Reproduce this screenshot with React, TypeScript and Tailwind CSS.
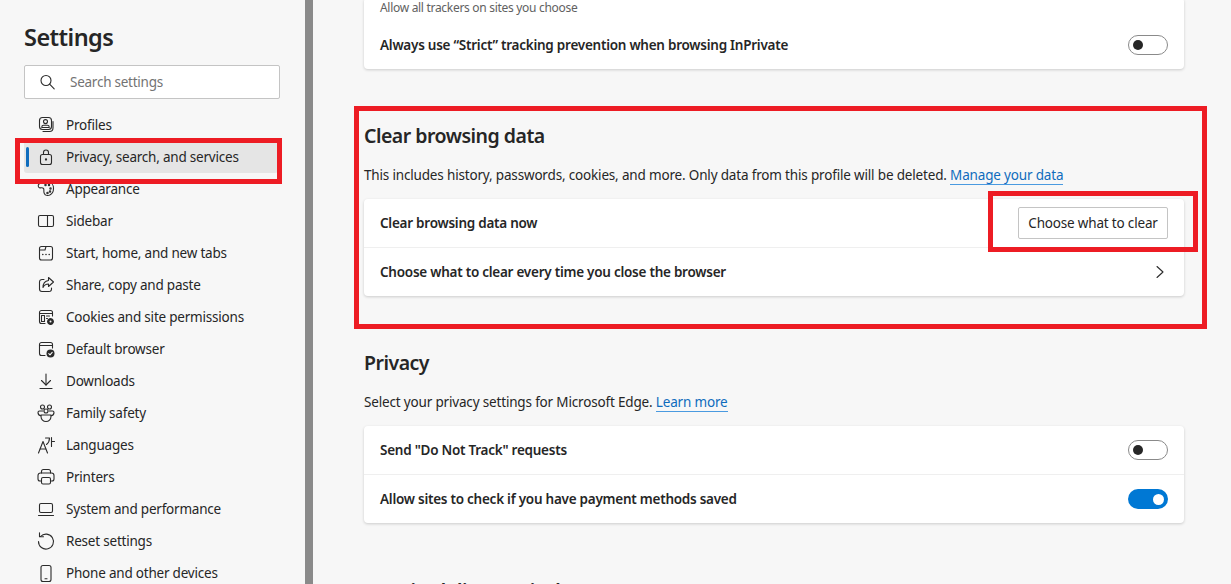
import React from "react";

const S = ({ children }: { children: React.ReactNode }) => (
  <svg width="20" height="20" viewBox="0 0 20 20" fill="none" stroke="#2b2b2b" strokeWidth="1.1" strokeLinecap="round" strokeLinejoin="round" className="shrink-0">
    {children}
  </svg>
);

const icons: Record<string, React.ReactNode> = {
  profiles: (
    <>
      <rect x="3.5" y="2.5" width="12" height="12" rx="3" />
      <circle cx="9.5" cy="6.6" r="2" />
      <path d="M5.8 12.5v-.5c0-1 .8-1.800 1.800-1.800h3.800c1 0 1.800.8 1.800 1.800v.5z" />
      <path d="M17 6.500v6.500a3.500 3.500 0 0 1-3.500 3.500H7" />
    </>
  ),
  lock: (
    <>
      <rect x="4.500" y="7.500" width="11" height="10" rx="2" />
      <path d="M7.500 7.500V5.500a2.500 2.500 0 0 1 5 0v2" />
      <circle cx="10" cy="12.500" r="0.6" fill="#2b2b2b" />
    </>
  ),
  palette: (
    <>
      <path d="M11 2.500c-2 0-3 1.200-4 1.500-1.500.4-3-.3-4.200 1.200-1 1.300-.6 3 .7 3.500 1.300.5 3-.5 4 .7 1 1.300-.3 3 .8 5 1 2 3.500 2.500 5.500 1.600 2.500-1.200 3.700-3.700 3.700-6.500 0-4-2.500-7-6.500-7z" />
      <circle cx="9.500" cy="6" r="0.7" />
      <circle cx="13" cy="6" r="0.7" />
      <circle cx="14.500" cy="9.500" r="0.7" />
      <circle cx="14" cy="12.500" r="0.7" />
      <circle cx="11.500" cy="14" r="0.7" />
    </>
  ),
  sidebar: (
    <>
      <rect x="2.500" y="4.500" width="15" height="11" rx="1.500" />
      <path d="M11.500 4.500v11" />
    </>
  ),
  start: (
    <>
      <rect x="3.500" y="3.500" width="13" height="13.500" rx="2" />
      <path d="M3.500 7h5.500l1-3.500" />
      <path d="M6.800 11.500h.01M10 11.500h.01M13.200 11.500h.01" strokeWidth="1.600" />
    </>
  ),
  share: (
    <>
      <path d="M8 4.500H6a2.500 2.500 0 0 0-2.500 2.500v7A2.500 2.500 0 0 0 6 16.500h7a2.500 2.500 0 0 0 2.500-2.500v-1" />
      <path d="M12.500 2.500l5 4.500-5 4.500V9c-2.500 0-4.300 1-5.500 3.500 0-4 2-6.500 5.500-7z" />
    </>
  ),
  cookies: (
    <>
      <path d="M9 16.500H5.500a2 2 0 0 1-2-2v-9a2 2 0 0 1 2-2h9a2 2 0 0 1 2 2V9" />
      <path d="M3.500 6.500h13" />
      <rect x="5.500" y="8.500" width="3" height="6" />
      <path d="M10.500 9h3M10.500 11.500h1" />
      <circle cx="14.500" cy="14.500" r="2.700" fill="#2b2b2b" stroke="#2b2b2b" strokeDasharray="1.500 0.800" strokeWidth="1.500" />
      <circle cx="14.500" cy="14.500" r="1" fill="#f7f7f7" stroke="none" />
    </>
  ),
  default: (
    <>
      <path d="M9 16.500H5.500a2 2 0 0 1-2-2v-9a2 2 0 0 1 2-2h9a2 2 0 0 1 2 2V9" />
      <path d="M3.500 6.500h13" />
      <circle cx="14.500" cy="14.500" r="4" fill="#2b2b2b" stroke="none" />
      <path d="M12.800 14.600l1.200 1.200 2.200-2.400" stroke="#f7f7f7" />
    </>
  ),
  downloads: (
    <>
      <path d="M10 3v11" />
      <path d="M5.500 9.500l4.500 4.500 4.500-4.500" />
      <path d="M4 17.500h12" />
    </>
  ),
  family: (
    <>
      <circle cx="6.500" cy="4" r="2" />
      <circle cx="13.500" cy="4" r="2" />
      <circle cx="10" cy="8" r="2" />
      <path d="M7 8H3.500A1.500 1.500 0 0 0 2 9.500c0 1.500 1 3 3 3.200" />
      <path d="M13 8h3.500A1.500 1.500 0 0 1 18 9.500c0 1.500-1 3-3 3.200" />
      <path d="M5 12h10v1.500a5 5 0 0 1-10 0z" />
    </>
  ),
  languages: (
    <>
      <path d="M2.500 18l4.500-11.500L11.500 18" />
      <path d="M4.200 14h5.600" />
      <path d="M9.500 3h4c0 3-1 5-3 6.500" />
      <path d="M15.500 2.500v9M15.500 6.500h3" />
    </>
  ),
  printers: (
    <>
      <path d="M5.500 6V4.500a2 2 0 0 1 2-2h5a2 2 0 0 1 2 2V6" />
      <path d="M5.500 14H4a2 2 0 0 1-2-2V8.500A2.500 2.500 0 0 1 4.500 6h11A2.500 2.500 0 0 1 18 8.500V12a2 2 0 0 1-2 2h-1.500" />
      <rect x="5.500" y="10.500" width="9" height="6.500" rx="1.500" />
    </>
  ),
  system: (
    <>
      <rect x="3.500" y="4.500" width="13" height="9" rx="1.500" />
      <path d="M2.500 16.500h15" />
    </>
  ),
  reset: (
    <>
      <path d="M4.500 5.500A7.500 7.500 0 1 1 2.500 10.500" />
      <path d="M3.500 1.800v4h4" />
    </>
  ),
  phone: (
    <>
      <rect x="5" y="2.500" width="10" height="16" rx="2" />
      <path d="M9 15.800h2" />
    </>
  ),
};

const nav: [string, string][] = [
  ["profiles", "Profiles"],
  ["lock", "Privacy, search, and services"],
  ["palette", "Appearance"],
  ["sidebar", "Sidebar"],
  ["start", "Start, home, and new tabs"],
  ["share", "Share, copy and paste"],
  ["cookies", "Cookies and site permissions"],
  ["default", "Default browser"],
  ["downloads", "Downloads"],
  ["family", "Family safety"],
  ["languages", "Languages"],
  ["printers", "Printers"],
  ["system", "System and performance"],
  ["reset", "Reset settings"],
  ["phone", "Phone and other devices"],
];

const Toggle = ({ on }: { on?: boolean }) =>
  on ? (
    <div className="flex h-[20px] w-[40px] items-center justify-end rounded-full bg-[#0078d4] pr-[4px]">
      <div className="h-[11px] w-[11px] rounded-full bg-white" />
    </div>
  ) : (
    <div className="flex h-[20px] w-[40px] items-center rounded-full border border-[#8a8a8a] bg-white pl-[4px]">
      <div className="h-[10px] w-[10px] rounded-full bg-[#262626]" />
    </div>
  );

const Row = ({ label, children, divider }: { label: string; children?: React.ReactNode; divider?: boolean }) => (
  <div className={`flex items-center justify-between px-4 ${divider ? "h-[49px] border-t border-[#efefef]" : "h-[48px]"}`}>
    <span className="text-[13.5px] font-semibold tracking-[-0.25px] text-[#262626]">{label}</span>
    {children}
  </div>
);

const cardCls = "rounded-[4px] bg-white shadow-[0_1px_3px_rgba(0,0,0,0.18)]";
const linkCls = "border-b border-[#4a9ae0] text-[#0f6cbd]";
const headCls = "h-[28px] text-[19.5px] leading-[28px] font-semibold tracking-[-0.5px] text-[#262626]";
const subCls = "h-[20px] text-[13.5px] leading-[20px] tracking-[-0.17px] text-[#262626]";

export default function App() {
  return (
    <div className="relative flex h-[584px] w-[1231px] overflow-hidden bg-[#f7f7f7] font-['Noto_Sans','Open_Sans',sans-serif]">
      <aside className="w-[305px] shrink-0 px-[24px] pt-[21px]">
        <h1 className="h-[33px] text-[23.5px] leading-[33px] font-semibold tracking-[-0.55px] text-[#262626]">Settings</h1>
        <div className="mt-[11px] flex h-[34px] w-[256px] items-center rounded-[2px] border border-[#c4c4c4] bg-white pl-[13px]">
          <svg width="18" height="18" viewBox="0 0 18 18" fill="none" stroke="#2b2b2b" strokeWidth="1.100" strokeLinecap="round">
            <circle cx="8" cy="7.500" r="5" />
            <path d="M11.600 11.200l4.600 4.600" />
          </svg>
          <span className="ml-[14px] text-[13.500px] tracking-[-0.25px] text-[#737373]">Search settings</span>
        </div>
        <nav className="mt-[10px] w-[254px]">
          {nav.map(([k, label], i) => (
            <div key={k} className={`relative flex h-[32px] items-center pl-[12px] ${i === 1 ? "rounded-[3px] bg-[#e5e5e5]" : ""}`}>
              {i === 1 && <div className="absolute top-[6px] left-[2px] h-[20px] w-[3px] rounded-full bg-[#0f6cbd]" />}
              <S>{icons[k]}</S>
              <span className="ml-[10px] text-[13.500px] tracking-[-0.21px] text-[#262626]">{label}</span>
            </div>
          ))}
        </nav>
      </aside>

      <div className="w-[8px] shrink-0 bg-[#8a8a8a]" />

      <main className="h-[584px] flex-1 overflow-hidden pr-[47px] pl-[51px]">
        <div className={`-mt-[2px] h-[71px] ${cardCls}`}>
          <div className="h-[20px] pl-4 text-[12px] leading-[20px] tracking-[-0.3px] text-[#616161]">Allow all trackers on sites you choose</div>
          <div className="mt-[3px]">
            <Row label="Always use “Strict” tracking prevention when browsing InPrivate">
              <Toggle />
            </Row>
          </div>
        </div>

        <h2 className={`mt-[53px] ${headCls}`}>Clear browsing data</h2>
        <p className={`mt-[15px] ${subCls}`}>
          This includes history, passwords, cookies, and more. Only data from this profile will be deleted.{" "}
          <span className={linkCls}>Manage your data</span>
        </p>
        <div className={`mt-[14px] ${cardCls}`}>
          <Row label="Clear browsing data now">
            <div className="flex h-[32px] w-[150px] items-center justify-center rounded-[2px] border border-[#c4c4c4] bg-white text-[13.500px] tracking-[-0.18px] text-[#262626]">
              Choose what to clear
            </div>
          </Row>
          <Row divider label="Choose what to clear every time you close the browser">
            <svg width="16" height="16" viewBox="0 0 16 16" fill="none" stroke="#2b2b2b" strokeWidth="1.100" strokeLinecap="round" strokeLinejoin="round">
              <path d="M5 2.500l6 5.500-6 5.500" />
            </svg>
          </Row>
        </div>

        <h2 className={`mt-[53px] ${headCls}`}>Privacy</h2>
        <p className={`mt-[15px] ${subCls}`}>
          Select your privacy settings for Microsoft Edge. <span className={linkCls}>Learn more</span>
        </p>
        <div className={`mt-[14px] ${cardCls}`}>
          <Row label={'Send "Do Not Track" requests'}>
            <Toggle />
          </Row>
          <Row divider label="Allow sites to check if you have payment methods saved">
            <Toggle on />
          </Row>
        </div>

        <h2 className={`mt-[54px] ${headCls}`}>Required diagnostic data</h2>
      </main>

      <div className="pointer-events-none absolute top-[138px] left-[15px] h-[46px] w-[267px] border-[5px] border-[#ed1c24]" />
      <div className="pointer-events-none absolute top-[106px] left-[354px] h-[223px] w-[853px] border-[5px] border-[#ed1c24]" />
      <div className="pointer-events-none absolute top-[191px] left-[988px] h-[61px] w-[210px] border-[5px] border-[#ed1c24]" />
    </div>
  );
}
